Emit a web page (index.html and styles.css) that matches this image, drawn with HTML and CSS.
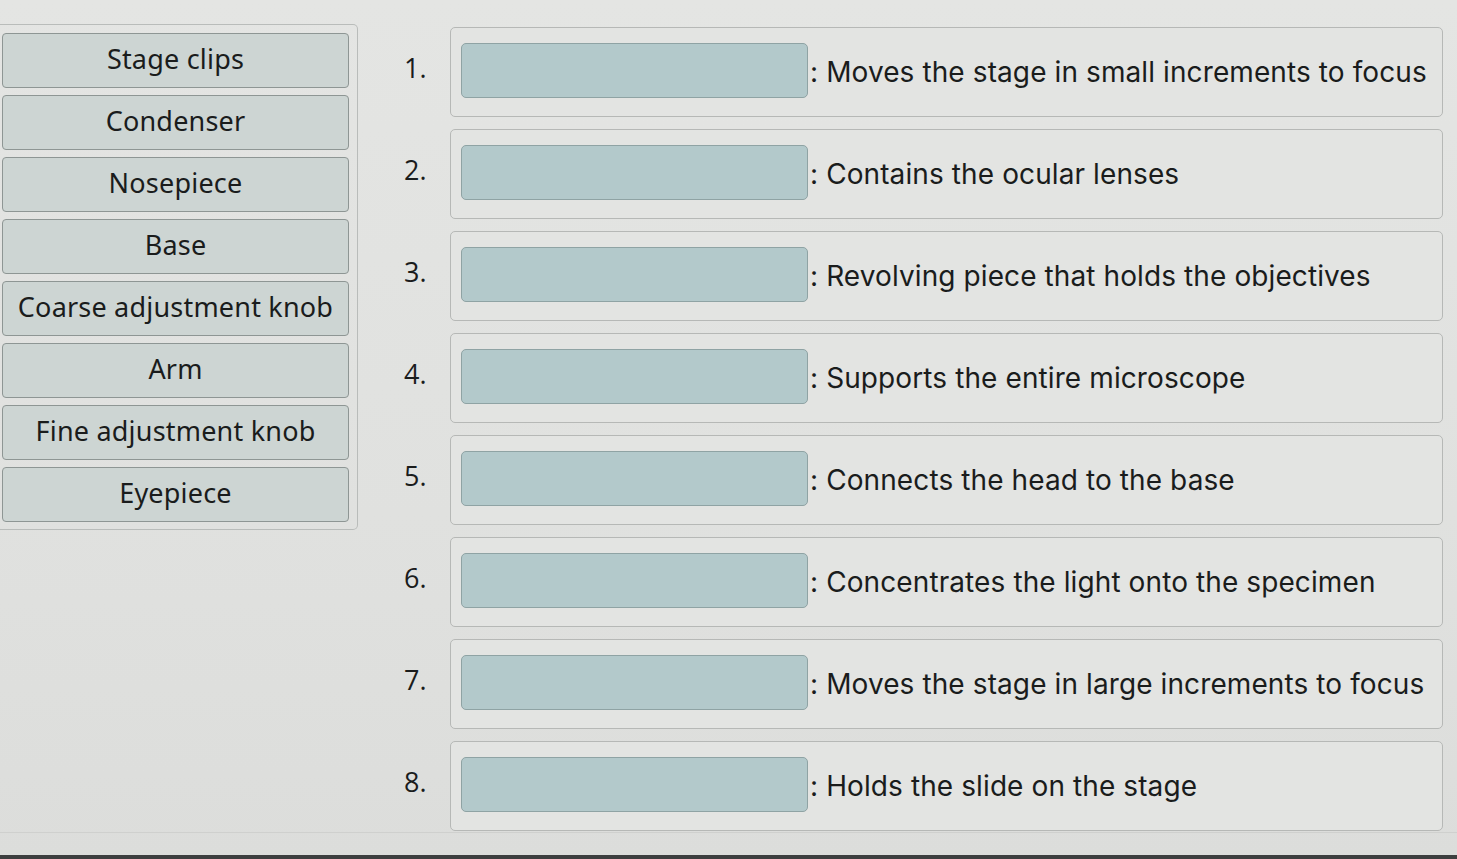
FILE: index.html
```html
<!DOCTYPE html>
<html lang="en">
<head>
<meta charset="utf-8">
<title>Microscope parts</title>
<link rel="stylesheet" href="styles.css">
</head>
<body>
<div class="page">
  <main class="main">
    <section class="bank">
      <div class="chip">Stage clips</div>
      <div class="chip">Condenser</div>
      <div class="chip">Nosepiece</div>
      <div class="chip">Base</div>
      <div class="chip">Coarse adjustment knob</div>
      <div class="chip">Arm</div>
      <div class="chip">Fine adjustment knob</div>
      <div class="chip">Eyepiece</div>
    </section>
    <ol class="questions">
      <li class="q"><span class="num">1.</span><div class="box"><div class="drop"></div><span class="desc">: Moves the stage in small increments to focus</span></div></li>
      <li class="q"><span class="num">2.</span><div class="box"><div class="drop"></div><span class="desc">: Contains the ocular lenses</span></div></li>
      <li class="q"><span class="num">3.</span><div class="box"><div class="drop"></div><span class="desc">: Revolving piece that holds the objectives</span></div></li>
      <li class="q"><span class="num">4.</span><div class="box"><div class="drop"></div><span class="desc">: Supports the entire microscope</span></div></li>
      <li class="q"><span class="num">5.</span><div class="box"><div class="drop"></div><span class="desc">: Connects the head to the base</span></div></li>
      <li class="q"><span class="num">6.</span><div class="box"><div class="drop"></div><span class="desc">: Concentrates the light onto the specimen</span></div></li>
      <li class="q"><span class="num">7.</span><div class="box"><div class="drop"></div><span class="desc">: Moves the stage in large increments to focus</span></div></li>
      <li class="q"><span class="num">8.</span><div class="box"><div class="drop"></div><span class="desc">: Holds the slide on the stage</span></div></li>
    </ol>
  </main>
  <div class="rule"></div>
  <div class="bezel"></div>
</div>
</body>
</html>
```

FILE: styles.css
```css
* { box-sizing: border-box; }
html, body { margin: 0; padding: 0; }
body {
  background: #e1e2e0;
  color: #1a1c1c;
  font-family: "Noto Sans", "Open Sans", "Liberation Sans", sans-serif;
  overflow: hidden;
}
.page {
  height: 859px;
  display: flex;
  flex-direction: column;
  background: linear-gradient(180deg, #e4e5e3 0%, #e0e1df 60%, #dcdddb 100%);
}
.main {
  flex: 1;
  min-height: 0;
  display: flex;
  align-items: flex-start;
}
.bank {
  width: 358px;
  margin-top: 24px;
  padding: 8px 8px 7px 2px;
  border: 1px solid #b9bcba;
  border-left: none;
  border-radius: 0 5px 5px 0;
  display: flex;
  flex-direction: column;
  gap: 7px;
}
.chip {
  height: 55px;
  display: flex;
  align-items: center;
  justify-content: center;
  padding-bottom: 4px;
  background: #cdd5d3;
  border: 1.5px solid #8e9694;
  border-radius: 4px;
  font-size: 27px;
  letter-spacing: 0.2px;
  white-space: nowrap;
}
.questions {
  list-style: none;
  margin: 27px 0 0 0;
  padding: 0 0 0 40px;
  flex: 1;
  display: flex;
  flex-direction: column;
  gap: 12px;
}
.q {
  display: flex;
  align-items: flex-start;
}
.num {
  width: 52px;
  padding-top: 22px;
  padding-left: 6px;
  font-family: "Open Sans", "Noto Sans", sans-serif;
  font-size: 27px;
}
.box {
  width: 993px;
  height: 90px;
  display: flex;
  align-items: center;
  padding-left: 10px;
  border: 1.5px solid #b6b8b6;
  border-radius: 5px;
  background: #e3e4e2;
}
.drop {
  width: 347px;
  height: 55px;
  margin-top: -4px;
  background: #b3c9cb;
  border: 1.5px solid #8fa3a4;
  border-radius: 5px;
  flex: none;
}
.desc {
  margin-left: 2px;
  font-family: "Inter", "Noto Sans", sans-serif;
  font-size: 28px;
  letter-spacing: 0.1px;
  white-space: nowrap;
}
.rule {
  height: 1px;
  background: #cfd0ce;
  margin-bottom: 22px;
}
.bezel {
  height: 4px;
  background: #3d3f3f;
}
```
